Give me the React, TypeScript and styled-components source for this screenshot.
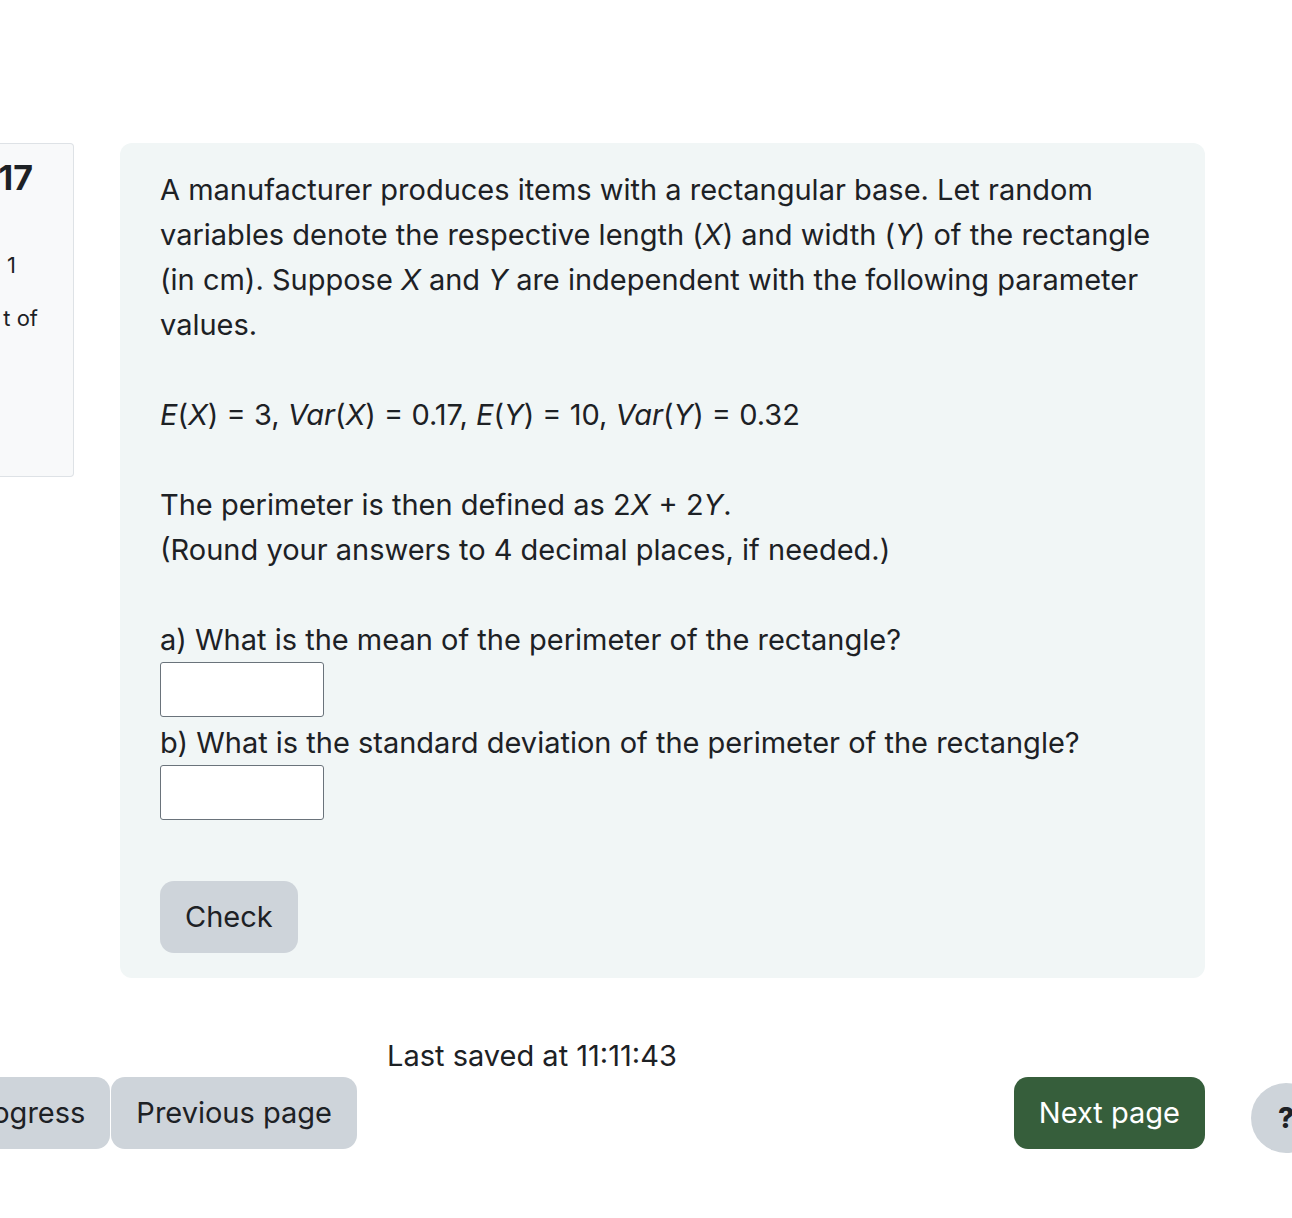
import React, { FC } from 'react';
import styled, { createGlobalStyle } from 'styled-components';

const GlobalStyle = createGlobalStyle`
    html, body {
        margin: 0;
        padding: 0;
        background: #fff;
        overflow: hidden;
    }
    body {
        font-family: Inter, "Noto Sans", "Liberation Sans", sans-serif;
        color: #1d2125;
        font-size: 29px;
        line-height: 45px;
    }
`;

const Page = styled.div`
    width: 1292px;
    height: 1218px;
    padding-top: 143px;
    box-sizing: border-box;
    position: relative;
    overflow: hidden;
`;

const QuestionRow = styled.div`
    display: grid;
    grid-template-columns: 74px 1085px;
    column-gap: 46px;
    align-items: start;
`;

const InfoBox = styled.div`
    height: 334px;
    box-sizing: border-box;
    background: #f8f9fa;
    border: 1px solid #dee2e6;
    border-left: none;
    border-radius: 0 4px 4px 0;
    padding-top: 12px;
    display: flex;
    flex-direction: column;
    overflow: hidden;
`;

const InfoLine = styled.div<{ $pr: number; $bold?: boolean; $mt?: number }>`
    display: flex;
    justify-content: flex-end;
    gap: 14px;
    white-space: nowrap;
    padding-right: ${p => p.$pr}px;
    margin-top: ${p => p.$mt ?? 0}px;
    font-size: ${p => (p.$bold ? 34 : 22)}px;
    font-weight: ${p => (p.$bold ? 700 : 400)};
    line-height: ${p => (p.$bold ? 44 : 34)}px;
`;

const Card = styled.div`
    background: #f1f6f6;
    border-radius: 12px;
    padding: 24px 40px 25px 40px;
`;

const Para = styled.p<{ $mb?: number }>`
    margin: 0 0 ${p => p.$mb ?? 45}px 0;
`;

const Answer = styled.input`
    display: block;
    width: 164px;
    height: 55px;
    box-sizing: border-box;
    border: 1.5px solid #6a737b;
    border-radius: 3px;
    background: #fff;
    margin: 0 0 3px 0;
`;

const Button = styled.button<{ $primary?: boolean }>`
    font-family: inherit;
    font-size: 29px;
    line-height: 36px;
    height: 72px;
    padding: 0 25px;
    border: none;
    border-radius: 14px;
    background: ${p => (p.$primary ? '#365e3b' : '#ced4da')};
    color: ${p => (p.$primary ? '#fff' : '#1d2125')};
    white-space: nowrap;
    flex-shrink: 0;
`;

const CheckButton = styled(Button)`
    margin-top: 58px;
`;

const Saved = styled.div`
    margin: 55px 0 0 387px;
    line-height: 45px;
    height: 45px;
`;

const NavRow = styled.div`
    display: flex;
    align-items: center;
    width: 1205px;
    margin-top: -1px;
`;

const LeftGroup = styled.div`
    width: 357px;
    display: flex;
    justify-content: flex-end;
    gap: 1px;
`;

const Spacer = styled.div`
    flex: 1;
`;

const HelpButton = styled.div`
    position: absolute;
    left: 1251px;
    top: 1083px;
    width: 70px;
    height: 70px;
    border-radius: 50%;
    background: #ced4da;
    display: flex;
    align-items: center;
    justify-content: center;
    font-weight: 800;
    font-size: 28px;
`;

const V: FC<{ children: React.ReactNode }> = ({ children }) => <i>{children}</i>;

export default function App() {
    return (
        <>
            <GlobalStyle />
            <Page>
                <QuestionRow>
                    <InfoBox>
                        <InfoLine $pr={40} $bold>Question 17</InfoLine>
                        <InfoLine $pr={90} $mt={17}>Not yet answered</InfoLine>
                        <InfoLine $pr={57} $mt={-3}>
                            <span>Marked out of</span>
                            <span>1</span>
                        </InfoLine>
                        <InfoLine $pr={35} $mt={19}>
                            <span>Flag question:</span>
                            <span>t of</span>
                        </InfoLine>
                    </InfoBox>
                    <Card>
                        <Para>
                            A manufacturer produces items with a rectangular base. Let random variables denote the
                            respective length (<V>X</V>) and width (<V>Y</V>) of the rectangle (in cm). Suppose <V>X</V> and{' '}
                            <V>Y</V> are independent with the following parameter values.
                        </Para>
                        <Para>
                            <V>E</V>(<V>X</V>) = 3, <V>Var</V>(<V>X</V>) = 0.17, <V>E</V>(<V>Y</V>) = 10, <V>Var</V>(<V>Y</V>) = 0.32
                        </Para>
                        <Para $mb={0}>
                            The perimeter is then defined as 2<V>X</V> + 2<V>Y</V>.
                        </Para>
                        <Para>(Round your answers to 4 decimal places, if needed.)</Para>
                        <Para $mb={0}>a) What is the mean of the perimeter of the rectangle?</Para>
                        <Answer aria-label="a" />
                        <Para $mb={0}>b) What is the standard deviation of the perimeter of the rectangle?</Para>
                        <Answer aria-label="b" />
                        <CheckButton>Check</CheckButton>
                    </Card>
                </QuestionRow>
                <Saved>Last saved at 11:11:43</Saved>
                <NavRow>
                    <LeftGroup>
                        <Button>Finish attempt progress</Button>
                        <Button>Previous page</Button>
                    </LeftGroup>
                    <Spacer />
                    <Button $primary>Next page</Button>
                </NavRow>
                <HelpButton>?</HelpButton>
            </Page>
        </>
    );
}
